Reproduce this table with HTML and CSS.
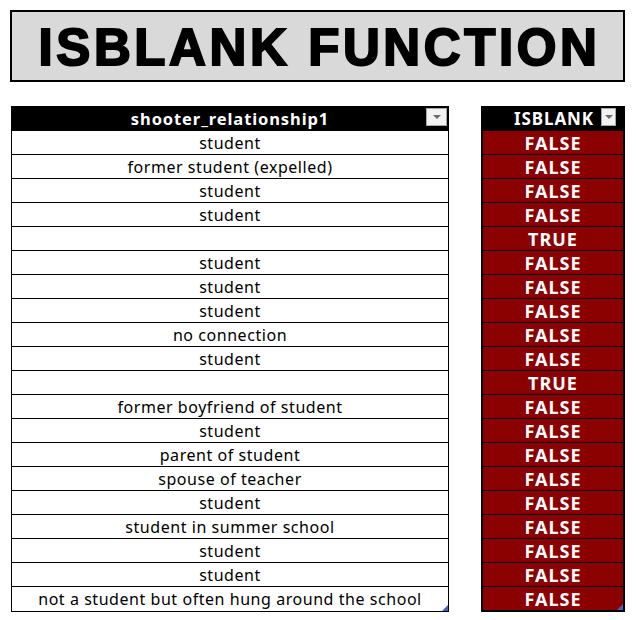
FILE: index.html
```html
<!DOCTYPE html>
<html>
<head>
<meta charset="utf-8">
<link rel="stylesheet" href="styles.css">
</head>
<body>
<div class="page">
  <div class="title"><span>ISBLANK FUNCTION</span></div>
  <div class="tables">
    <div class="tbl left">
      <div class="row head"><span>shooter_relationship1</span><span class="dd"><svg width="8" height="5" viewBox="0 0 8 5"><path d="M0 0H8L4 4Z" fill="#6b6b6b"/></svg></span></div>
      <div class="row">student</div>
      <div class="row">former student (expelled)</div>
      <div class="row">student</div>
      <div class="row">student</div>
      <div class="row"></div>
      <div class="row">student</div>
      <div class="row">student</div>
      <div class="row">student</div>
      <div class="row">no connection</div>
      <div class="row">student</div>
      <div class="row"></div>
      <div class="row">former boyfriend of student</div>
      <div class="row">student</div>
      <div class="row">parent of student</div>
      <div class="row">spouse of teacher</div>
      <div class="row">student</div>
      <div class="row">student in summer school</div>
      <div class="row">student</div>
      <div class="row">student</div>
      <div class="row">not a student but often hung around the school</div>
      <span class="grip"></span>
    </div>
    <div class="tbl right">
      <div class="row head"><span>ISBLANK</span><span class="dd"><svg width="8" height="5" viewBox="0 0 8 5"><path d="M0 0H8L4 4Z" fill="#6b6b6b"/></svg></span></div>
      <div class="row">FALSE</div>
      <div class="row">FALSE</div>
      <div class="row">FALSE</div>
      <div class="row">FALSE</div>
      <div class="row">TRUE</div>
      <div class="row">FALSE</div>
      <div class="row">FALSE</div>
      <div class="row">FALSE</div>
      <div class="row">FALSE</div>
      <div class="row">FALSE</div>
      <div class="row">TRUE</div>
      <div class="row">FALSE</div>
      <div class="row">FALSE</div>
      <div class="row">FALSE</div>
      <div class="row">FALSE</div>
      <div class="row">FALSE</div>
      <div class="row">FALSE</div>
      <div class="row">FALSE</div>
      <div class="row">FALSE</div>
      <div class="row">FALSE</div>
      <span class="grip"></span>
    </div>
  </div>
</div>
</body>
</html>
```
FILE: styles.css
```css
html, body {
  margin: 0;
  padding: 0;
  background: #fff;
}
.page {
  padding: 10px 11px 0 10px;
  font-family: "Noto Sans", "DejaVu Sans", sans-serif;
}
.title {
  width: 611px;
  height: 68px;
  border: 2px solid #000;
  background: #d9d9d9;
  display: flex;
  align-items: center;
  justify-content: center;
}
.title span {
  font-family: "Liberation Sans", Arial, sans-serif;
  font-weight: bold;
  font-size: 51px;
  letter-spacing: 3.6px;
  -webkit-text-stroke: 2px #000;
  color: #000;
  line-height: 1;
  margin-left: 4px;
  margin-top: 2px;
}
.tables {
  margin-top: 24px;
  display: flex;
  gap: 32px;
  padding-left: 1px;
}
.tbl {
  position: relative;
  display: flex;
  flex-direction: column;
}
.left {
  width: 436px;
  border: 1px solid #000;
  border-top: 0;
}
.right {
  width: 140px;
  border: 2px solid #000;
  border-top: 0;
  background: #8b0000;
}
.row {
  height: 23px;
  border-bottom: 1px solid #000;
  display: flex;
  align-items: center;
  justify-content: center;
  font-size: 16px;
  letter-spacing: 0.55px;
  color: #000;
  white-space: nowrap;
}
.row.head {
  height: 25px;
  border-bottom: 0;
  background: #000;
  color: #fff;
  font-weight: bold;
  font-size: 16.5px;
  letter-spacing: 0.9px;
  position: relative;
}
.right .row {
  color: #fff;
  font-weight: bold;
  font-size: 18px;
  letter-spacing: 1px;
}
.right .row.head {
  font-size: 17px;
  letter-spacing: 0.9px;
  justify-content: flex-start;
  padding-left: 31px;
}
.right .row:last-of-type {
  border-bottom: 0;
}
.left .row:last-of-type {
  border-bottom: 0;
}
.dd {
  position: absolute;
  right: 1px;
  top: 2px;
  width: 19px;
  height: 16px;
  background: #f2f2f2;
  border: 1px solid #a6a6a6;
  display: flex;
  align-items: center;
  justify-content: center;
}
.right .dd {
  right: 7px;
  width: 13px;
}
.grip {
  position: absolute;
  right: 0;
  bottom: 0;
  width: 0;
  height: 0;
  border-left: 6px solid transparent;
  border-bottom: 6px solid #4a5fb5;
}
```
